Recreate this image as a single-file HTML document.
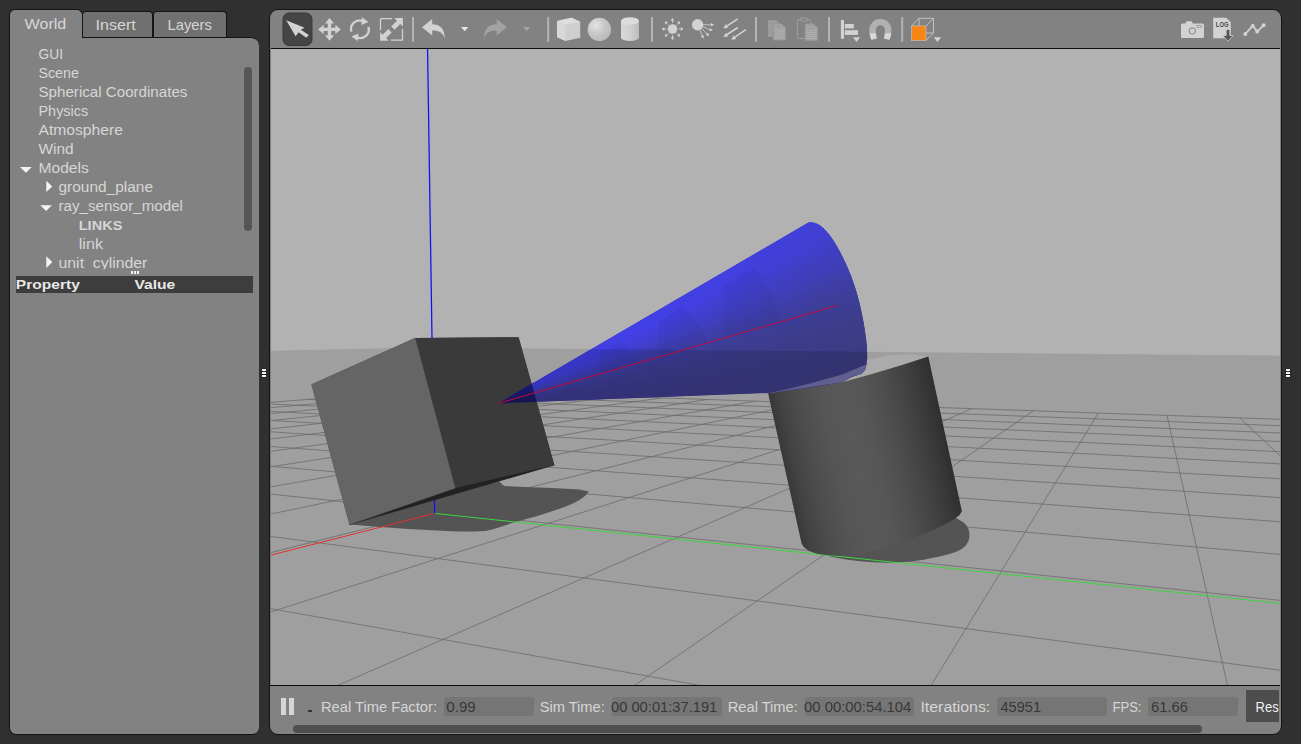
<!DOCTYPE html>
<html><head><meta charset="utf-8"><title>Gazebo</title><style>
html,body{margin:0;padding:0;background:#303030;}
body{width:1301px;height:744px;overflow:hidden;position:relative;font-family:"Liberation Sans",sans-serif;}
.abs{position:absolute;box-sizing:border-box;}
#lpanel{left:9px;top:37px;width:250px;height:698px;background:#828282;border:1px solid #141414;border-right:0 none;border-radius:0 8px 7px 7px;}
.tab{top:11px;height:27px;background:#707070;border:1px solid #141414;border-bottom:none;border-radius:4px 4px 0 0;}
#tabw{left:9px;top:9px;width:74px;height:29px;background:#828282;border:1px solid #141414;border-bottom:none;border-radius:6px 6px 0 0;}
#rframe{left:269px;top:9px;width:1013px;height:726px;background:#828282;border:1px solid #141414;border-radius:9px;}
.hline{left:271px;width:1009px;height:1px;background:#0c0c0c;}
.field{top:697px;height:19px;background:#757575;border-radius:3px;}
svg{position:absolute;left:0;top:0;font-family:"Liberation Sans",sans-serif;}
</style></head><body>
<div class="abs tab" style="left:82px;width:71px"></div>
<div class="abs tab" style="left:153px;width:74px"></div>
<div class="abs" id="lpanel"></div>
<div class="abs" id="tabw"></div>
<div class="abs" style="left:244px;top:67px;width:8px;height:164px;background:#565656;border-radius:4px"></div>
<div class="abs" style="left:16px;top:276px;width:237px;height:17px;background:#3d3d3d"></div>
<div class="abs" style="left:131.4px;top:271.3px;width:8px;height:2.8px;background:repeating-linear-gradient(90deg,#f2f2f2 0 1.8px,transparent 1.8px 2.9px)"></div>
<div class="abs" id="rframe"></div>
<div class="abs hline" style="top:48px"></div>
<div class="abs hline" style="top:685px;left:270px;width:1010px"></div>
<div class="abs" style="left:262px;top:369px;width:4px;height:2px;background:#f6f6f6;box-shadow:0 0 0 0.6px #222"></div>
<div class="abs" style="left:262px;top:372px;width:4px;height:2px;background:#f6f6f6;box-shadow:0 0 0 0.6px #222"></div>
<div class="abs" style="left:262px;top:375px;width:4px;height:2px;background:#f6f6f6;box-shadow:0 0 0 0.6px #222"></div>
<div class="abs" style="left:1286px;top:369px;width:4px;height:2px;background:#f6f6f6;box-shadow:0 0 0 0.6px #222"></div>
<div class="abs" style="left:1286px;top:372px;width:4px;height:2px;background:#f6f6f6;box-shadow:0 0 0 0.6px #222"></div>
<div class="abs" style="left:1286px;top:375px;width:4px;height:2px;background:#f6f6f6;box-shadow:0 0 0 0.6px #222"></div>
<div class="abs field" style="left:444px;width:90.0px"></div>
<div class="abs field" style="left:611.5px;width:110.2px"></div>
<div class="abs field" style="left:804.5px;width:109.9px"></div>
<div class="abs field" style="left:997px;width:109.6px"></div>
<div class="abs field" style="left:1148.1px;width:89.7px"></div>
<div class="abs" style="left:1246px;top:690px;width:33px;height:32px;background:#4d4d4d"></div>
<div class="abs" style="left:281px;top:698px;width:5px;height:17px;background:#d6d6d6"></div>
<div class="abs" style="left:289px;top:698px;width:5.3px;height:17px;background:#d6d6d6"></div>
<div class="abs" style="left:307.8px;top:710px;width:4px;height:2px;background:#333"></div>
<div class="abs" style="left:293px;top:725.3px;width:908.5px;height:7.4px;background:#4f4f4f;border-radius:4px"></div>
<svg width="1301" height="744" viewBox="0 0 1301 744"><defs>
<clipPath id="vp"><rect x="271" y="49" width="1009" height="636"/></clipPath>
<clipPath id="conecl"><polygon points="498.1,403.4 808.6,222.2 811.4,222.3 814.3,222.8 817.0,223.7 819.5,225.1 821.8,226.8 823.9,228.7 825.9,230.7 827.8,232.9 829.6,235.1 831.3,237.4 832.9,239.7 834.4,242.1 835.9,244.5 837.3,247.0 838.7,249.5 840.1,252.0 841.4,254.6 842.7,257.1 843.9,259.7 845.2,262.2 846.3,264.8 847.5,267.4 848.6,270.0 849.7,272.7 850.8,275.3 851.8,278.0 852.8,280.7 853.7,283.4 854.6,286.1 855.4,288.8 856.3,291.5 857.1,294.2 857.8,297.0 858.6,299.8 859.3,302.5 859.9,305.3 860.6,308.1 861.2,310.8 861.8,313.6 862.4,316.4 862.9,319.2 863.4,322.0 863.9,324.8 864.4,327.6 864.8,330.5 865.2,333.3 865.6,336.1 866.0,338.9 866.3,341.8 866.6,344.6 866.8,347.4 867.0,350.3 867.1,353.1 867.1,356.0 867.1,358.8 866.9,361.7 866.5,364.5 865.9,367.3 865.0,370.0 861.7,373.8 852.3,376.8 842.2,382.3 812.8,387.0 796.1,389.4 768.8,392.9"/></clipPath>
<linearGradient id="cylg" gradientUnits="userSpaceOnUse" x1="785" y1="470" x2="945" y2="435">
<stop offset="0" stop-color="#383838"/><stop offset="0.06" stop-color="#424242"/><stop offset="0.16" stop-color="#4c4c4c"/><stop offset="0.3" stop-color="#555555"/><stop offset="0.44" stop-color="#595959"/><stop offset="0.56" stop-color="#565656"/><stop offset="0.68" stop-color="#4f4f4f"/><stop offset="0.8" stop-color="#454545"/><stop offset="0.91" stop-color="#3a3a3a"/><stop offset="1" stop-color="#2f2f2f"/></linearGradient>
<linearGradient id="coneend" gradientUnits="userSpaceOnUse" x1="740" y1="240" x2="860" y2="360">
<stop offset="0" stop-color="#3c3c78" stop-opacity="0"/><stop offset="1" stop-color="#3c3c78" stop-opacity="0.55"/></linearGradient>
</defs><g clip-path="url(#vp)"><rect x="271" y="49" width="1009" height="636" fill="#b2b2b2"/>
<polygon points="271.0,350.7 424.0,347.4 1281.0,355.7 1281.0,686.0 271.0,686.0" fill="#9f9f9f"/>
<path d="M426.8 389.8L1580.6 429.7M426.8 389.8L-12492.8 1432.2M390.9 392.7L1617.8 438.2M461.9 391.1L-19401.8 2110.9M351.3 395.9L1662.1 448.2M498.5 392.3L-39201.7 4100.5M307.3 399.5L1715.6 460.4M536.7 393.6L-36032.7 4101.6M258.2 403.4L1781.6 475.4M576.6 395.0L-32863.7 4102.7M203.0 407.9L1864.9 494.3M618.2 396.5L-29694.7 4103.7M140.4 412.9L1973.5 518.9M661.8 398.0L-26525.7 4104.8M69.0 418.7L2120.9 552.3M707.4 399.5L-23356.7 4105.8M-13.2 425.3L2332.3 600.3M755.1 401.2L-20187.7 4106.9M-109.1 433.1L2661.1 674.9M805.3 402.9L-17018.7 4107.9M-222.2 442.2L3242.9 807.0M858.0 404.7L-13849.7 4109.0M-357.7 453.1L4551.7 1104.0M913.4 406.7L-10680.7 4110.0M-522.9 466.5L10219.6 2390.1M971.7 408.7L-7511.7 4111.1M-728.7 483.1L12438.4 4117.7M1033.3 410.8L-4342.7 4112.1M-992.5 504.3L4996.3 4115.2M1098.3 413.1L-1173.7 4113.2M-1342.5 532.6L-2445.8 4112.8M1167.0 415.4L1995.3 4114.2M-1829.2 571.9L-9887.9 4110.3M1239.9 418.0L5164.3 4115.3M-2552.5 630.2L-17330.0 4107.8M1317.2 420.6L8333.3 4116.3M-3739.8 726.0L-24772.1 4105.3M1399.4 423.5L11502.3 4117.4M-6048.9 912.3L-32214.2 4102.9M1487.0 426.5L14671.3 4118.4M-12492.8 1432.2L-39656.3 4100.4M1580.6 429.7L17840.3 4119.5" stroke="#6a6a6a" stroke-width="1" fill="none" opacity="0.78"/>
<polygon points="349.6,524.5 377.6,526.8 404.5,528.7 431.4,530.3 458.3,531.4 475.0,531.6 485.2,530.9 492.0,529.6 498.7,527.6 512.1,522.9 539.0,515.5 552.0,511.3 565.9,506.6 574.0,503.0 579.4,499.9 585.0,496.0 588.8,491.6 579.4,489.6 552.5,488.0 525.6,486.9 504.1,486.0 497.7,480.0 455.8,480.0" fill="#505050" opacity="0.94"/>
<polygon points="824.0,554.7 835.0,557.5 847.6,559.7 860.0,561.2 873.0,562.2 886.0,562.7 898.4,562.6 911.0,561.6 923.7,559.7 932.0,558.1 940.6,556.3 949.5,553.9 957.6,551.2 962.5,548.5 966.0,545.3 968.3,541.5 969.3,537.5 969.3,533.0 968.5,529.0 966.7,525.7 964.3,523.1 959.2,519.7 950.0,515.0 900.0,520.0" fill="#505050" opacity="0.94"/>
<line x1="434.7" y1="513.4" x2="-13850.4" y2="4152.7" stroke="#e23030" stroke-width="1"/>
<line x1="434.7" y1="513.4" x2="34768.8" y2="4168.9" stroke="#3cd63c" stroke-width="1"/>
<line x1="434.7" y1="513.4" x2="426.0" y2="-51.6" stroke="#1010f4" stroke-width="1.25"/>
<polygon points="311.6,384.5 415.3,338.1 518.6,337.2 554.3,464.9 349.6,524.6" fill="#3a3a3a"/>
<polygon points="349.6,524.6 455.4,488.0 554.3,464.9" fill="#222222" stroke="#222222" stroke-width="0.6"/>
<polygon points="311.6,384.5 415.3,338.1 455.4,488.0 349.6,524.6" fill="#656565" stroke="#656565" stroke-width="0.5"/>
<polygon points="415.3,338.1 518.6,337.2 554.3,464.9 455.4,488.0" fill="#3a3a3a"/>
<polygon points="768.1,393.3 796.1,389.2 842.2,382.3 873.0,373.8 903.7,364.6 928.3,356.4 928.3,356.4 911.4,354.3 888.4,355.4 866.8,360.0 866.0,364.5 842.2,374.6 811.5,383.0 790.0,388.6" fill="#ababab"/>
<polygon points="768.1,393.3 796.1,389.2 842.2,382.3 873.0,373.8 903.7,364.6 928.3,356.4 961.9,511.3 959.5,515.0 955.9,518.0 948.5,522.5 940.6,526.5 932.0,530.5 923.7,534.1 911.0,539.0 898.4,543.4 885.0,547.5 873.0,551.0 864.0,553.0 856.1,554.4 847.0,555.3 839.2,555.6 831.0,555.4 824.0,554.7 818.5,553.9 813.8,552.7 809.0,550.8 805.4,548.5 803.0,546.0 801.6,543.4 801.6,543.4" fill="url(#cylg)"/>
<g clip-path="url(#conecl)">
<polygon points="498.1,403.4 808.6,222.2 811.4,222.3 814.3,222.8 817.0,223.7 819.5,225.1 821.8,226.8 823.9,228.7 825.9,230.7 827.8,232.9 829.6,235.1 831.3,237.4 832.9,239.7 834.4,242.1 835.9,244.5 837.3,247.0 838.7,249.5 840.1,252.0 841.4,254.6 842.7,257.1 843.9,259.7 845.2,262.2 846.3,264.8 847.5,267.4 848.6,270.0 849.7,272.7 850.8,275.3 851.8,278.0 852.8,280.7 853.7,283.4 854.6,286.1 855.4,288.8 856.3,291.5 857.1,294.2 857.8,297.0 858.6,299.8 859.3,302.5 859.9,305.3 860.6,308.1 861.2,310.8 861.8,313.6 862.4,316.4 862.9,319.2 863.4,322.0 863.9,324.8 864.4,327.6 864.8,330.5 865.2,333.3 865.6,336.1 866.0,338.9 866.3,341.8 866.6,344.6 866.8,347.4 867.0,350.3 867.1,353.1 867.1,356.0 867.1,358.8 866.9,361.7 866.5,364.5 865.9,367.3 865.0,370.0 861.7,373.8 852.3,376.8 842.2,382.3 812.8,387.0 796.1,389.4 768.8,392.9" fill="rgb(62,60,170)"/>
<polygon points="498.1,403.4 860.8,191.7 864.3,197.7" fill="rgb(66,64,230)"/>
<polygon points="498.1,403.4 863.0,195.4 866.3,201.4" fill="rgb(66,64,229)"/>
<polygon points="498.1,403.4 865.1,199.2 868.4,205.2" fill="rgb(66,64,229)"/>
<polygon points="498.1,403.4 867.2,202.9 870.4,209.0" fill="rgb(66,64,229)"/>
<polygon points="498.1,403.4 869.2,206.7 872.3,212.8" fill="rgb(66,64,228)"/>
<polygon points="498.1,403.4 871.2,210.5 874.3,216.6" fill="rgb(66,64,228)"/>
<polygon points="498.1,403.4 873.1,214.3 876.2,220.4" fill="rgb(66,64,226)"/>
<polygon points="498.1,403.4 875.0,218.1 878.0,224.3" fill="rgb(66,64,224)"/>
<polygon points="498.1,403.4 876.9,222.0 879.8,228.2" fill="rgb(65,64,221)"/>
<polygon points="498.1,403.4 878.7,225.8 881.6,232.1" fill="rgb(65,64,218)"/>
<polygon points="498.1,403.4 880.5,229.7 883.3,236.0" fill="rgb(65,64,216)"/>
<polygon points="498.1,403.4 882.3,233.6 885.0,239.9" fill="rgb(65,64,213)"/>
<polygon points="498.1,403.4 884.0,237.6 886.6,243.9" fill="rgb(64,64,211)"/>
<polygon points="498.1,403.4 885.6,241.5 888.2,247.9" fill="rgb(64,64,208)"/>
<polygon points="498.1,403.4 887.3,245.5 889.8,251.8" fill="rgb(64,64,206)"/>
<polygon points="498.1,403.4 888.9,249.5 891.3,255.8" fill="rgb(64,64,201)"/>
<polygon points="498.1,403.4 890.4,253.4 892.8,259.9" fill="rgb(64,64,197)"/>
<polygon points="498.1,403.4 891.9,257.5 894.3,263.9" fill="rgb(64,64,193)"/>
<polygon points="498.1,403.4 893.4,261.5 895.7,267.9" fill="rgb(63,63,189)"/>
<polygon points="498.1,403.4 894.8,265.5 897.0,272.0" fill="rgb(63,63,185)"/>
<polygon points="498.1,403.4 896.2,269.6 898.3,276.1" fill="rgb(63,63,181)"/>
<polygon points="498.1,403.4 897.6,273.6 899.6,280.2" fill="rgb(63,63,176)"/>
<polygon points="498.1,403.4 898.9,277.7 900.9,284.3" fill="rgb(63,63,173)"/>
<polygon points="498.1,403.4 900.1,281.8 902.0,288.4" fill="rgb(63,63,170)"/>
<polygon points="498.1,403.4 901.3,285.9 903.2,292.5" fill="rgb(62,62,166)"/>
<polygon points="498.1,403.4 902.5,290.0 904.3,296.6" fill="rgb(62,62,163)"/>
<polygon points="498.1,403.4 903.6,294.2 905.4,300.8" fill="rgb(62,62,160)"/>
<polygon points="498.1,403.4 904.7,298.3 906.4,305.0" fill="rgb(62,62,158)"/>
<polygon points="498.1,403.4 905.8,302.5 907.4,309.1" fill="rgb(62,61,156)"/>
<polygon points="498.1,403.4 906.8,306.6 908.3,313.3" fill="rgb(62,61,154)"/>
<polygon points="498.1,403.4 907.8,310.8 909.2,317.5" fill="rgb(61,61,152)"/>
<polygon points="498.1,403.4 908.7,315.0 910.1,321.7" fill="rgb(61,60,150)"/>
<polygon points="498.1,403.4 909.6,319.2 910.9,325.9" fill="rgb(61,60,148)"/>
<polygon points="498.1,403.4 910.4,323.4 911.7,330.1" fill="rgb(61,60,147)"/>
<polygon points="498.1,403.4 911.2,327.6 912.4,334.3" fill="rgb(61,60,146)"/>
<polygon points="498.1,403.4 912.0,331.8 913.1,338.6" fill="rgb(61,59,145)"/>
<polygon points="498.1,403.4 912.7,336.0 913.7,342.8" fill="rgb(61,59,144)"/>
<polygon points="498.1,403.4 913.3,340.2 914.3,347.0" fill="rgb(60,59,143)"/>
<polygon points="498.1,403.4 913.9,344.5 914.9,351.3" fill="rgb(60,59,142)"/>
<polygon points="498.1,403.4 914.5,348.7 915.4,355.5" fill="rgb(60,58,141)"/>
<polygon points="498.1,403.4 915.1,353.0 915.8,359.8" fill="rgb(60,58,140)"/>
<polygon points="498.1,403.4 915.6,357.2 916.3,364.0" fill="rgb(60,58,140)"/>
<polygon points="498.1,403.4 916.0,361.5 916.6,368.3" fill="rgb(60,58,139)"/>
<polygon points="498.1,403.4 916.4,365.8 917.0,372.6" fill="rgb(60,58,139)"/>
<polygon points="498.1,403.4 916.8,370.0 917.3,376.9" fill="rgb(60,58,138)"/>
<polygon points="498.1,403.4 917.1,374.3 917.5,381.1" fill="rgb(60,58,138)"/>
<polygon points="498.1,403.4 917.4,378.6 917.7,385.4" fill="rgb(60,58,138)"/>
<polygon points="498.1,403.4 917.6,382.8 917.9,389.7" fill="rgb(60,58,137)"/>
<polygon points="599.5,353.2 620.6,340.9 628.5,349.0 632.7,357.5 634.8,363.9 599.5,374.1" fill="#20206a" opacity="0.07"/>
<polygon points="659.0,321.5 681.1,307.6 692.0,316.0 699.3,326.5 704.0,335.0 707.3,343.0 659.0,356.9" fill="#20206a" opacity="0.07"/>
<polygon points="723.5,285.9 753.7,268.2 764.0,281.0 771.9,295.0 778.0,308.0 781.9,318.0 785.0,320.6 723.5,338.3" fill="#20206a" opacity="0.07"/>
<rect x="480" y="200" width="420" height="220" fill="url(#coneend)"/>
<polygon points="271.0,350.7 424.0,347.4 1281.0,355.7 1281.0,686.0 271.0,686.0" fill="#000" opacity="0.13"/>
<polygon points="415.3,338.1 518.6,337.2 554.3,464.9 455.4,488.0" fill="#000030" opacity="0.55"/>
<polygon points="768.1,393.3 796.1,389.2 842.2,382.3 873.0,373.8 903.7,364.6 928.3,356.4 928.3,356.4 911.4,354.3 888.4,355.4 866.8,360.0 866.0,364.5 842.2,374.6 811.5,383.0 790.0,388.6" fill="#fff" opacity="0.22"/>
</g>
<line x1="498.1" y1="403.4" x2="837.6" y2="305.4" stroke="#c00c3c" stroke-width="1"/></g><defs><radialGradient id="sphg" cx="0.35" cy="0.33" r="0.75"><stop offset="0" stop-color="#e4e4e4"/><stop offset="0.5" stop-color="#c8c8c8"/><stop offset="1" stop-color="#b8b8b8"/></radialGradient>
<linearGradient id="cyli" x1="0" x2="1"><stop offset="0" stop-color="#d8d8d8"/><stop offset="0.5" stop-color="#d0d0d0"/><stop offset="1" stop-color="#bcbcbc"/></linearGradient></defs><rect x="283" y="13" width="29" height="32.5" rx="6" fill="#454545" stroke="#3a3a3a" stroke-width="1"/>
<path d="M286.2 20.3 L304.6 27.7 L300.9 29.7 L308.8 34.9 L306.3 37.8 L298.6 32.3 L295.6 36.2 Z" fill="#d2d2d2"/>
<path d="M329.5 18.0 l4.6 5.6 h-2.9 v4.1 h4.1 v-2.9 l5.6 4.6 l-5.6 4.6 v-2.9 h-4.1 v4.1 h2.9 l-4.6 5.6 l-4.6 -5.6 h2.9 v-4.1 h-4.1 v2.9 l-5.6 -4.6 l5.6 -4.6 v2.9 h4.1 v-4.1 h-2.9 Z" fill="#d2d2d2"/>
<g fill="none" stroke="#d2d2d2" stroke-width="2.3"><path d="M351.4 31.599999999999998 A8.6 8.6 0 0 1 363.2 21.2"/><path d="M368.4 26.8 A8.6 8.6 0 0 1 356.59999999999997 37.2"/></g>
<path d="M362.0 17.299999999999997 L368.29999999999995 22.0 L361.4 25.0 Z" fill="#d2d2d2"/>
<path d="M357.79999999999995 41.1 L351.5 36.4 L358.4 33.4 Z" fill="#d2d2d2"/>
<path d="M380.5 18.7 H392 M380.5 18.7 V30 M402.5 29 V40.2 H391" fill="none" stroke="#d2d2d2" stroke-width="1.3"/>
<path d="M402.9 18.1 V26.6 L400.3 24 L394.6 29.7 L391.3 26.4 L397 20.7 L394.4 18.1 Z M380.1 40.7 V32.2 L382.7 34.8 L388.4 29.1 L391.7 32.4 L386 38.1 L388.6 40.7 Z" fill="#d2d2d2"/>
<rect x="412" y="17" width="2" height="24.6" fill="#b4b4b4"/>
<rect x="547.2" y="17" width="2" height="24.6" fill="#b4b4b4"/>
<rect x="651" y="17" width="2" height="24.6" fill="#b4b4b4"/>
<rect x="755" y="17" width="2" height="24.6" fill="#b4b4b4"/>
<rect x="828" y="17" width="2" height="24.6" fill="#b4b4b4"/>
<rect x="901.2" y="17" width="2" height="24.6" fill="#b4b4b4"/>
<path d="M422 27.3 L432.2 19 V24.2 C440 24.2 445 28.5 444.6 38.8 C443 32.8 439.5 30.6 432.2 30.6 V35.6 Z" fill="#d2d2d2"/>
<path d="M461 27 h7.4 l-3.7 4.3 Z" fill="#e6e6e6"/>
<path d="M506.8 27.3 L496.6 19 V24.2 C488.8 24.2 483.8 28.5 484.2 38.8 C485.8 32.8 489.3 30.6 496.6 30.6 V35.6 Z" fill="#a2a2a2"/>
<path d="M523 27 h7.4 l-3.7 4.3 Z" fill="#a2a2a2"/>
<path d="M557 21 L571.5 17.8 L580.2 21.8 V37.8 L565.5 41 L557 37 Z" fill="#cfcfcf"/>
<path d="M557 21 L571.5 17.8 L580.2 21.8 L565.5 24.6 Z" fill="#dedede"/>
<path d="M557 21 L565.5 24.6 V41 L557 37 Z" fill="#d8d8d8"/>
<circle cx="599.4" cy="29.4" r="11.7" fill="url(#sphg)"/>
<path d="M621 21 V37.5 A9 3.6 0 0 0 639 37.5 V21 Z" fill="url(#cyli)"/><ellipse cx="630" cy="21" rx="9" ry="3.8" fill="#dcdcdc"/>
<circle cx="672.5" cy="29" r="4.8" fill="#d2d2d2"/>
<path d="M678.5 29.0 L680.7 29.0" stroke="#d2d2d2" stroke-width="0.9"/><path d="M683.5 29.0 L680.7 30.9 L680.7 27.1 Z" fill="#d2d2d2"/>
<path d="M676.7 33.2 L678.3 34.8" stroke="#d2d2d2" stroke-width="0.9"/><path d="M680.3 36.8 L677.0 36.1 L679.6 33.5 Z" fill="#d2d2d2"/>
<path d="M672.5 35.0 L672.5 37.2" stroke="#d2d2d2" stroke-width="0.9"/><path d="M672.5 40.0 L670.6 37.2 L674.4 37.2 Z" fill="#d2d2d2"/>
<path d="M668.3 33.2 L666.7 34.8" stroke="#d2d2d2" stroke-width="0.9"/><path d="M664.7 36.8 L665.4 33.5 L668.0 36.1 Z" fill="#d2d2d2"/>
<path d="M666.5 29.0 L664.3 29.0" stroke="#d2d2d2" stroke-width="0.9"/><path d="M661.5 29.0 L664.3 27.1 L664.3 30.9 Z" fill="#d2d2d2"/>
<path d="M668.3 24.8 L666.7 23.2" stroke="#d2d2d2" stroke-width="0.9"/><path d="M664.7 21.2 L668.0 21.9 L665.4 24.5 Z" fill="#d2d2d2"/>
<path d="M672.5 23.0 L672.5 20.8" stroke="#d2d2d2" stroke-width="0.9"/><path d="M672.5 18.0 L674.4 20.8 L670.6 20.8 Z" fill="#d2d2d2"/>
<path d="M676.7 24.8 L678.3 23.2" stroke="#d2d2d2" stroke-width="0.9"/><path d="M680.3 21.2 L679.6 24.5 L677.0 21.9 Z" fill="#d2d2d2"/>
<circle cx="697.6" cy="24.7" r="5.7" fill="#d2d2d2"/>
<path d="M697.6 24.7 L710.9 24.8" stroke="#d2d2d2" stroke-width="0.8"/><path d="M714.3 24.8 L710.9 26.5 L710.9 23.1 Z" fill="#d2d2d2"/>
<path d="M697.6 24.7 L709.6 29.5" stroke="#d2d2d2" stroke-width="0.8"/><path d="M712.8 30.8 L709.0 31.1 L710.3 28.0 Z" fill="#d2d2d2"/>
<path d="M697.6 24.7 L706.9 33.8" stroke="#d2d2d2" stroke-width="0.8"/><path d="M709.3 36.2 L705.7 35.0 L708.1 32.6 Z" fill="#d2d2d2"/>
<path d="M697.6 24.7 L702.3 35.7" stroke="#d2d2d2" stroke-width="0.8"/><path d="M703.6 38.8 L700.7 36.3 L703.8 35.0 Z" fill="#d2d2d2"/>
<path d="M737.8 18.8 L727.1 25.9" stroke="#d2d2d2" stroke-width="1.5"/><path d="M723.3 28.4 L725.8 24.1 L728.3 27.8 Z" fill="#d2d2d2"/>
<path d="M737.8 27.5 L727.1 34.5" stroke="#d2d2d2" stroke-width="1.5"/><path d="M723.3 37 L725.9 32.7 L728.3 36.4 Z" fill="#d2d2d2"/>
<path d="M745.8 29.6 L735.0 37.1" stroke="#d2d2d2" stroke-width="1.5"/><path d="M731.3 39.7 L733.7 35.3 L736.2 38.9 Z" fill="#d2d2d2"/>
<path d="M768 20.2 h8.5 l3 3 v13.5 h-11.5 Z" fill="#9c9c9c"/><path d="M773 23.6 h8.5 l4.3 4.3 v12.4 h-12.8 Z" fill="#a2a2a2" stroke="#8e8e8e" stroke-width="0.6"/>
<rect x="797.3" y="19.5" width="13.5" height="19" rx="1.8" fill="none" stroke="#a2a2a2" stroke-width="0.9"/><rect x="800.5" y="18" width="7" height="3" rx="1" fill="#828282" stroke="#a2a2a2" stroke-width="0.9"/><path d="M805 23.8 h8.5 l4.3 4.3 v12.6 h-12.8 Z" fill="#a2a2a2" stroke="#8e8e8e" stroke-width="0.6"/>
<rect x="774.5" y="29.5" width="10.0" height="0.7" fill="#b4b4b4"/>
<rect x="774.5" y="31.5" width="10.0" height="0.7" fill="#b4b4b4"/>
<rect x="774.5" y="33.5" width="10.0" height="0.7" fill="#b4b4b4"/>
<rect x="774.5" y="35.5" width="10.0" height="0.7" fill="#b4b4b4"/>
<rect x="774.5" y="37.5" width="10.0" height="0.7" fill="#b4b4b4"/>
<rect x="806.5" y="30.0" width="10.0" height="0.7" fill="#b4b4b4"/>
<rect x="806.5" y="32.0" width="10.0" height="0.7" fill="#b4b4b4"/>
<rect x="806.5" y="34.0" width="10.0" height="0.7" fill="#b4b4b4"/>
<rect x="806.5" y="36.0" width="10.0" height="0.7" fill="#b4b4b4"/>
<rect x="806.5" y="38.0" width="10.0" height="0.7" fill="#b4b4b4"/>
<rect x="840.9" y="20" width="3.1" height="18.8" fill="#d2d2d2"/><rect x="844.8" y="24" width="9" height="4.4" fill="#d2d2d2"/><rect x="844.8" y="30.2" width="13.2" height="4.7" fill="#d2d2d2"/><path d="M853 37.3 h7 l-3.5 4.6 Z" fill="#d2d2d2"/>
<path d="M869.3 30 A11.1 11.1 0 0 1 891.5 30 Q891.5 35.5 889.4 39.7 L884 38.5 Q885 34 885 29.8 A4.6 4.6 0 0 0 875.8 29.8 Q875.8 34 876.8 38.5 L871.4 39.7 Q869.3 35.5 869.3 30 Z" fill="#b2b2b2"/>
<path d="M869.6 33.3 H875.9 Q876.1 36 876.8 38.5 L871.4 39.7 Q870 36.8 869.6 33.3 Z M891.2 33.3 H884.9 Q884.7 36 884 38.5 L889.4 39.7 Q890.8 36.8 891.2 33.3 Z" fill="#d8d8d8"/>
<g fill="none" stroke="#c8c8c8" stroke-width="0.9"><rect x="919" y="18.3" width="14.5" height="14.7"/><path d="M911.6 25.9 L919 18.3 M926 25.9 L933.5 18.3 M926 40.4 L933.5 33 M911.6 40.4 L919 33"/></g>
<rect x="911.6" y="25.9" width="14.4" height="14.5" fill="#f58613" stroke="#c8c8c8" stroke-width="0.6"/>
<path d="M933.8 37.2 h7.4 l-3.7 4.7 Z" fill="#d2d2d2"/>
<path d="M1182.5 23.6 h3 l0.8 -2.4 h5.6 l0.8 2.4 h9.8 q1.5 0 1.5 1.5 v11.4 q0 1.5 -1.5 1.5 h-20 q-1.5 0 -1.5 -1.5 v-11.4 q0 -1.5 1.5 -1.5 Z" fill="#d2d2d2"/><circle cx="1192.3" cy="31" r="3.2" fill="none" stroke="#828282" stroke-width="1"/><rect x="1197" y="25.4" width="4.6" height="1.9" fill="none" stroke="#828282" stroke-width="0.6"/>
<path d="M1213.2 17.7 h13 l4.6 4.6 v15.9 h-17.6 Z" fill="#d2d2d2"/>
<text x="1215.8" y="27.2" font-size="7.2" font-weight="bold" fill="#484848" textLength="12.8" lengthAdjust="spacingAndGlyphs">LOG</text>
<path d="M1226.2 29.5 h3.6 v6 h3.4 l-5.2 5.6 l-5.2 -5.6 h3.4 Z" fill="#555" stroke="#d2d2d2" stroke-width="0.7"/>
<path d="M1245.3 33.9 L1252.7 25.9 L1257.2 31.4 L1263.6 25.3" fill="none" stroke="#d2d2d2" stroke-width="1.8"/>
<circle cx="1245.3" cy="33.9" r="2" fill="#d2d2d2"/>
<circle cx="1252.7" cy="25.9" r="2" fill="#d2d2d2"/>
<circle cx="1257.2" cy="31.4" r="2" fill="#d2d2d2"/>
<circle cx="1263.6" cy="25.3" r="2" fill="#d2d2d2"/><defs><clipPath id="treecl"><rect x="10" y="40" width="235" height="229.6"/></clipPath></defs><g clip-path="url(#treecl)">
<text x="38.5" y="59.0" font-size="14" fill="#d6d6d6" textLength="24.5" lengthAdjust="spacingAndGlyphs">GUI</text>
<text x="38.5" y="78.0" font-size="14" fill="#d6d6d6" textLength="40.3" lengthAdjust="spacingAndGlyphs">Scene</text>
<text x="38.5" y="97.0" font-size="14" fill="#d6d6d6" textLength="148.9" lengthAdjust="spacingAndGlyphs">Spherical Coordinates</text>
<text x="38.5" y="116.0" font-size="14" fill="#d6d6d6" textLength="49.7" lengthAdjust="spacingAndGlyphs">Physics</text>
<text x="38.5" y="135.0" font-size="14" fill="#d6d6d6" textLength="84.4" lengthAdjust="spacingAndGlyphs">Atmosphere</text>
<text x="38.5" y="154.0" font-size="14" fill="#d6d6d6" textLength="35.2" lengthAdjust="spacingAndGlyphs">Wind</text>
<text x="38.5" y="173.0" font-size="14" fill="#d6d6d6" textLength="50.3" lengthAdjust="spacingAndGlyphs">Models</text>
<text x="58.5" y="192.0" font-size="14" fill="#d6d6d6" textLength="94.5" lengthAdjust="spacingAndGlyphs">ground_plane</text>
<text x="58.5" y="211.0" font-size="14" fill="#d6d6d6" textLength="124.4" lengthAdjust="spacingAndGlyphs">ray_sensor_model</text>
<text x="78.7" y="249.0" font-size="14" fill="#d6d6d6" textLength="24.3" lengthAdjust="spacingAndGlyphs">link</text>
<text x="58.5" y="268.0" font-size="14" fill="#d6d6d6" textLength="88.9" lengthAdjust="spacingAndGlyphs">unit_cylinder</text>
<text x="78.7" y="230.0" font-size="13.5" fill="#d6d6d6" font-weight="bold" textLength="43.7" lengthAdjust="spacingAndGlyphs">LINKS</text>
</g>
<path d="M20 167.1 h11.8 l-5.9 5.6 Z" fill="#f4f4f4"/>
<path d="M40.3 205.3 h11.6 l-5.8 5.8 Z" fill="#f4f4f4"/>
<path d="M46.3 180.8 v11.3 l6 -5.65 Z" fill="#f4f4f4"/>
<path d="M46.3 256.3 v11.6 l6 -5.8 Z" fill="#f4f4f4"/>
<text x="24.5" y="29.0" font-size="14.5" fill="#d6d6d6" textLength="41.8" lengthAdjust="spacingAndGlyphs">World</text>
<text x="95.5" y="30.0" font-size="14.5" fill="#d6d6d6" textLength="40.2" lengthAdjust="spacingAndGlyphs">Insert</text>
<text x="167.5" y="30.0" font-size="14.5" fill="#d6d6d6" textLength="44.3" lengthAdjust="spacingAndGlyphs">Layers</text>
<text x="15.8" y="289.4" font-size="13.5" fill="#e8e8e8" font-weight="bold" textLength="64.0" lengthAdjust="spacingAndGlyphs">Property</text>
<text x="134.5" y="289.4" font-size="13.5" fill="#e8e8e8" font-weight="bold" textLength="40.8" lengthAdjust="spacingAndGlyphs">Value</text><defs><clipPath id="rescl"><rect x="1246" y="690" width="33" height="32"/></clipPath></defs><text x="320.9" y="712.0" font-size="14" fill="#d6d6d6" textLength="116.1" lengthAdjust="spacingAndGlyphs">Real Time Factor:</text>
<text x="539.7" y="712.0" font-size="14" fill="#d6d6d6" textLength="65.1" lengthAdjust="spacingAndGlyphs">Sim Time:</text>
<text x="727.8" y="712.0" font-size="14" fill="#d6d6d6" textLength="70.0" lengthAdjust="spacingAndGlyphs">Real Time:</text>
<text x="920.4" y="712.0" font-size="14" fill="#d6d6d6" textLength="69.9" lengthAdjust="spacingAndGlyphs">Iterations:</text>
<text x="1112.5" y="712.0" font-size="14" fill="#d6d6d6" textLength="29.0" lengthAdjust="spacingAndGlyphs">FPS:</text>
<text x="446.3" y="712.0" font-size="14" fill="#383838" textLength="29.4" lengthAdjust="spacingAndGlyphs">0.99</text>
<text x="611.0" y="712.0" font-size="14" fill="#383838" textLength="106.3" lengthAdjust="spacingAndGlyphs">00 00:01:37.191</text>
<text x="804.0" y="712.0" font-size="14" fill="#383838" textLength="107.3" lengthAdjust="spacingAndGlyphs">00 00:00:54.104</text>
<text x="1000.5" y="712.0" font-size="14" fill="#383838" textLength="40.5" lengthAdjust="spacingAndGlyphs">45951</text>
<text x="1151.0" y="712.0" font-size="14" fill="#383838" textLength="37.1" lengthAdjust="spacingAndGlyphs">61.66</text>
<g clip-path="url(#rescl)"><text x="1255.6" y="711.5" font-size="14" fill="#f0f0f0" textLength="23.1" lengthAdjust="spacingAndGlyphs">Res</text></g></svg>
</body></html>
